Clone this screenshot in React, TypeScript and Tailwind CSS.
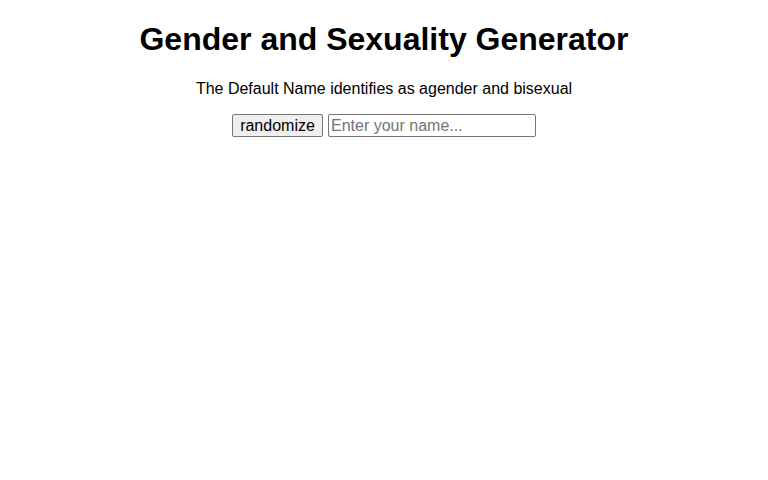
export default function App() {
  return (
    <div className="bg-white text-black text-center" style={{ fontFamily: '"Liberation Sans", Arial, sans-serif' }}>
      <h1 className="text-[32px] font-bold leading-[37px] pt-[21px] mb-[22px]">Gender and Sexuality Generator</h1>
      <p className="text-[16px] leading-[18px] mb-[16px]">The Default Name identifies as agender and bisexual</p>
      <div className="flex justify-center items-center gap-[5px]">
        <button className="w-[91px] h-[23px] border border-[#767676] rounded-[2px] bg-[#efefef] text-[16px] leading-[18px] text-black">
          randomize
        </button>
        <input
          className="w-[208px] h-[23px] border border-[#767676] rounded-[2px] px-[2px] text-[16px] leading-[18px] placeholder:text-[#757575] outline-none"
          placeholder="Enter your name..."
        />
      </div>
    </div>
  );
}
